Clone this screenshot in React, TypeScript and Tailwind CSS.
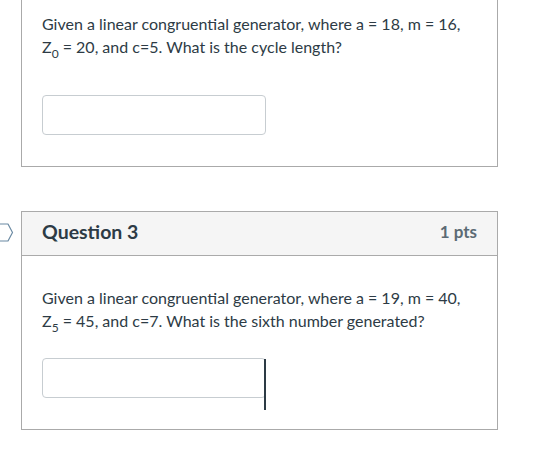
import React from "react"

const font = { fontFamily: "Lato, 'Open Sans', sans-serif" }

function Z({ sub }: { sub: string }) {
    return (
        <span>
            Z<sub className="text-[12px] align-[-2px] leading-none">{sub}</sub>
        </span>
    )
}

export default function App() {
    return (
        <div className="relative h-[452px] w-[560px] overflow-hidden bg-white text-[#2d3b45]" style={font}>
            <div className="pl-[21px]">
                {/* previous question (cut off at top) */}
                <div className="w-[477px] border-x border-b border-[#aaaaaa] px-5 pt-[12px] pb-[31px]">
                    <p className="text-[16px] leading-[23px]">
                        Given a linear congruential generator, where a = 18, m = 16,
                        <br />
                        <Z sub="0" /> = 20, and c=5. What is the cycle length?
                    </p>
                    <div className="mt-[37px] h-[40px] w-[224px] rounded border border-[#c7cdd1]" />
                </div>

                {/* Question 3 */}
                <div className="relative mt-[44px] w-[477px] border border-[#aaaaaa]">
                    <div className="flex h-[44px] items-center justify-between border-b border-[#aaaaaa] bg-[#f5f5f5] px-5 pb-[3px]">
                        <h2 className="text-[19.5px] font-bold text-[#2d3b45]">Question 3</h2>
                        <span className="text-[17px] font-bold text-[#5b6a74]">1 pts</span>
                    </div>
                    <div className="px-5 pt-[30px] pb-[31px]">
                        <p className="text-[16px] leading-[23px]">
                            Given a linear congruential generator, where a = 19, m = 40,
                            <br />
                            <Z sub="5" /> = 45, and c=7. What is the sixth number generated?
                        </p>
                        <div className="relative mt-[26px] h-[40px] w-[224px] rounded border border-[#c7cdd1]">
                            {/* text cursor */}
                            <div className="absolute -right-[1px] top-0 h-[51px] w-[2px] bg-[#2d3b45]" />
                        </div>
                    </div>
                </div>
            </div>

            {/* bookmark flag */}
            <svg className="absolute left-0 top-[223px]" width="14" height="19" viewBox="0 0 14 19" fill="none">
                <path d="M-1 1 H8 L12.5 9.5 L8 18 H-1" stroke="#6b8aa3" strokeWidth="1.2" strokeLinejoin="round" />
            </svg>
        </div>
    )
}
